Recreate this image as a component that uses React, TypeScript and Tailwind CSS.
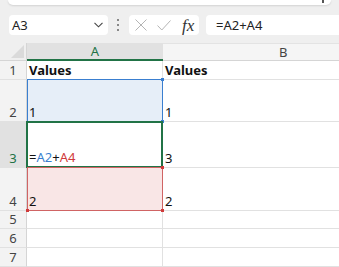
import React from "react";

const font = { fontFamily: '"Noto Sans", "Open Sans", Arial, sans-serif' };

function RowHead({ n, sel }: { n: number; sel?: boolean }) {
  return (
    <div
      className={`flex items-end justify-center pb-[1px] border-b border-[#e1e1e1] border-r ${
        sel ? "bg-[#e1e1e1] text-[#217346] border-r-[#217346]" : "bg-[#f3f3f3] text-[#444] border-r-[#d5d5d5]"
      } text-[13px] leading-[16px]`}
    >
      {n}
    </div>
  );
}

export default function App() {
  return (
    <div className="w-[339px] h-[267px] bg-[#efefef] overflow-hidden flex flex-col" style={font}>
      <div className="mx-[8px] h-[5px] bg-white rounded-b-[6px] shadow-[0_1px_2px_rgba(0,0,0,0.12)] relative">
        <div className="absolute right-[7px] top-0 w-[2px] h-[3px] bg-[#555]" />
      </div>
      <div className="mt-[10px] flex items-center h-[20px]">
        <div className="ml-[9px] w-[99px] h-[20px] bg-white rounded-[4px] flex items-center justify-between pl-[3px] pr-[5px]">
          <span className="text-[13px] text-[#222] leading-none">A3</span>
          <svg width="9" height="6" viewBox="0 0 9 6">
            <path d="M0.5 0.8 L4.5 4.8 L8.5 0.8" fill="none" stroke="#444" strokeWidth="1.1" />
          </svg>
        </div>
        <div className="ml-[9px] w-[2px] flex flex-col gap-[3px]">
          <div className="w-[2px] h-[2px] bg-[#888]" />
          <div className="w-[2px] h-[2px] bg-[#888]" />
          <div className="w-[2px] h-[2px] bg-[#888]" />
        </div>
        <div className="ml-[10px] w-[70px] h-[20px] bg-white rounded-[4px] flex items-center">
          <svg className="ml-[6px]" width="12" height="12" viewBox="0 0 12 12">
            <path d="M0.5 0.5 L11.5 11.5 M11.5 0.5 L0.5 11.5" stroke="#b4b4b4" strokeWidth="1" fill="none" />
          </svg>
          <svg className="ml-[10px]" width="14" height="11" viewBox="0 0 14 11">
            <path d="M0.5 5.5 L4.8 10 L13.5 0.5" stroke="#b4b4b4" strokeWidth="1" fill="none" />
          </svg>
          <span
            className="ml-[11px] text-[17px] italic text-[#333] leading-none"
            style={{ fontFamily: '"Liberation Serif", "DejaVu Serif", serif' }}
          >
            fx
          </span>
        </div>
        <div className="ml-[7px] flex-1 h-[20px] bg-white rounded-l-[4px] flex items-center pl-[10px]">
          <span className="text-[13px] text-[#222] leading-none">=A2+A4</span>
        </div>
      </div>
      <div className="mt-[8px] grid grid-cols-[27px_136px_1fr] grid-rows-[18px_19px_42px_46px_43px_18px_19px_19px] text-[13px] text-[#111]">
        {/* header row */}
        <div className="bg-[#efefef] relative border-r border-[#d5d5d5] border-b">
          <svg className="absolute right-[2px] bottom-[2px]" width="13" height="13" viewBox="0 0 13 13">
            <path d="M13 0 L13 13 L0 13 Z" fill="#dadada" />
          </svg>
        </div>
        <div className="bg-[#e1e1e1] border-b-2 border-[#217346] flex items-center justify-center text-[#217346] text-[13px] leading-none">
          A
        </div>
        <div className="bg-[#f5f5f5] border-t border-[#e3e3e3] border-b border-b-[#d5d5d5] flex items-center text-[#444] leading-none">
          <span className="ml-[116px]">B</span>
        </div>

        {/* row 1 */}
        <RowHead n={1} />
        <div className="bg-white border-b border-r border-[#e1e1e1] font-bold flex items-end pl-[2px] leading-[17px]">Values</div>
        <div className="bg-white border-b border-[#e1e1e1] font-bold flex items-end pl-[2px] leading-[17px]">Values</div>

        {/* row 2 */}
        <RowHead n={2} />
        <div className="relative bg-[#e6eef8] border border-[#3a7fd0] flex items-end pl-[1px] leading-[17px] -mt-[1px]">
          1
          <div className="absolute -right-[2px] -top-[2px] w-[3px] h-[3px] bg-[#3a7fd0]" />
          <div className="absolute -right-[2px] -bottom-[2px] w-[3px] h-[3px] bg-[#3a7fd0]" />
        </div>
        <div className="bg-white border-b border-[#e1e1e1] flex items-end pl-[2px] leading-[17px]">1</div>

        {/* row 3 */}
        <RowHead n={3} sel />
        <div className="relative bg-white border-2 border-[#217346] flex items-end pl-[1px] leading-[17px] -mt-[1px] -ml-[1px]">
          <span>
            =<span className="text-[#3a7fd0]">A2</span>+<span className="text-[#d03a3a]">A4</span>
          </span>
        </div>
        <div className="bg-white border-b border-[#e1e1e1] flex items-end pl-[2px] leading-[17px]">3</div>

        {/* row 4 */}
        <RowHead n={4} />
        <div className="relative bg-[#f9e6e6] border border-[#d06464] flex items-end pl-[1px] leading-[17px] -mt-[1px]">
          2
          <div className="absolute -right-[2px] -top-[2px] w-[3px] h-[3px] bg-[#d03a3a]" />
          <div className="absolute -right-[2px] -bottom-[2px] w-[3px] h-[3px] bg-[#d03a3a]" />
          <div className="absolute -left-[2px] -bottom-[2px] w-[3px] h-[3px] bg-[#d03a3a]" />
        </div>
        <div className="bg-white border-b border-[#e1e1e1] flex items-end pl-[2px] leading-[17px]">2</div>

        {[5, 6, 7].map((n) => (
          <React.Fragment key={n}>
            <RowHead n={n} />
            <div className="bg-white border-b border-r border-[#e1e1e1]" />
            <div className="bg-white border-b border-[#e1e1e1]" />
          </React.Fragment>
        ))}
      </div>
    </div>
  );
}
